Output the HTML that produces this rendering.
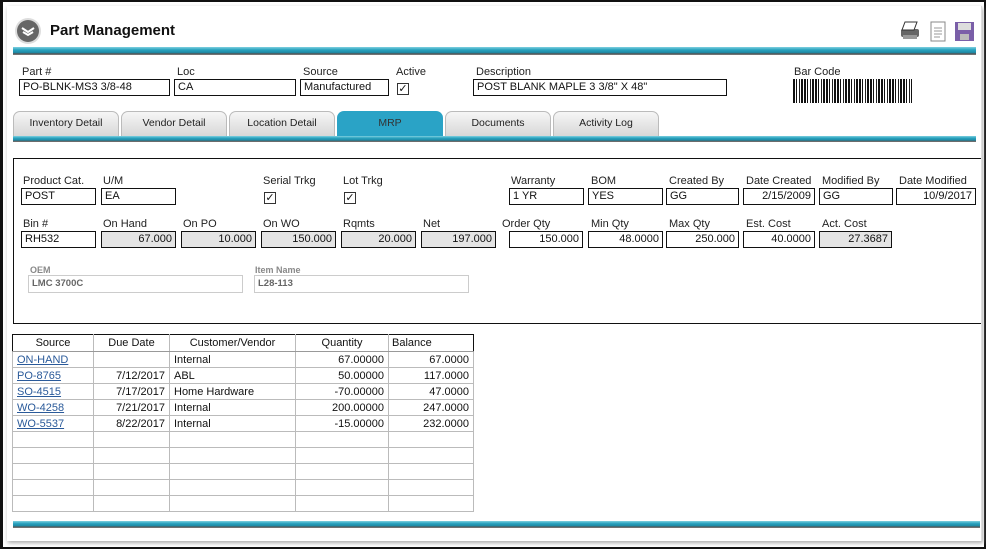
<!DOCTYPE html>
<html><head><meta charset="utf-8"><style>
*{box-sizing:border-box;margin:0;padding:0}
body{width:986px;height:549px;position:relative;background:#fff;font-family:"Liberation Sans",sans-serif;font-size:11px;color:#111;overflow:hidden}
.a{position:absolute}
.lbl{position:absolute;font-size:11px;white-space:nowrap;color:#222}
.in{position:absolute;height:17px;border:1px solid #111;background:#fff;font-size:11px;line-height:15px;padding:0 3px;white-space:nowrap;overflow:hidden}
.g{background:#e4e4e4}
.r{text-align:right}
.cb{position:absolute;width:12px;height:12px;border:1px solid #333;background:#fff;font-size:11px;line-height:10px;text-align:center}
.bar{position:absolute;left:13px;width:963px;height:8px;background:linear-gradient(#7fd0e0 0,#2aa3bf 35%,#1d8aa6 70%,#555 85%,#888 100%)}
.tab{position:absolute;top:111px;height:26px;width:106px;border:1px solid #bbb;border-bottom:none;border-radius:7px 7px 0 0;background:linear-gradient(#f6f6f6,#d6d6d6);text-align:center;line-height:22px;font-size:10.5px;color:#222}
table{border-collapse:collapse;position:absolute;left:12px;top:334px;width:462px;border:1px solid #111;font-size:11px}
td{border:1px solid #bbb;height:16px;padding:0 4px;white-space:nowrap}
th{font-weight:normal;height:17px;border-left:1px solid #bbb;border-bottom:1px solid #999}
a{color:#2a5a9a}
.oem{position:absolute;font-size:9px;font-weight:bold;color:#888}
.oin{position:absolute;height:18px;border:1px solid #ccc;font-size:9.5px;font-weight:bold;color:#666;line-height:16px;padding:0 3px}
</style></head><body>
<div class="a" style="left:0;top:0;width:986px;height:549px;border:2px solid #111;border-left-width:3px"></div>
<div class="a" style="left:7px;top:6px;width:975px;height:535px;box-shadow:1px 2px 4px #aaa;border-right:1px solid #ddd"></div>
<svg class="a" style="left:14px;top:17px" width="28" height="28"><circle cx="14" cy="14" r="13" fill="#ddd"/><circle cx="14" cy="14" r="11" fill="#666"/><path d="M8 11l6 4 6-4M9 15l5 3 5-3" stroke="#fff" stroke-width="2" fill="none"/></svg>
<div class="a" style="left:50px;top:22px;font-size:15px;font-weight:bold">Part Management</div>
<svg class="a" style="left:899px;top:21px" width="76" height="22">
<rect x="2" y="8" width="18" height="8" fill="#666" rx="2"/><polygon points="6,1 18,1 15,9 3,9" fill="#fff" stroke="#333"/><rect x="4" y="14" width="14" height="4" fill="#999"/>
<rect x="32" y="1" width="14" height="19" fill="#fff" stroke="#888"/><path d="M35 7h8M35 10h8M35 13h8M35 16h6" stroke="#999"/>
<rect x="56" y="1" width="19" height="19" fill="#7a5fa8"/><rect x="59" y="2" width="13" height="7" fill="#ddd"/><rect x="61" y="13" width="9" height="6" fill="#bbb"/>
</svg>
<div class="bar" style="top:47px"></div>
<div class="lbl" style="left:22px;top:66px">Part #</div>
<div class="in" style="left:19px;top:79px;width:151px">PO-BLNK-MS3 3/8-48</div>
<div class="lbl" style="left:177px;top:66px">Loc</div>
<div class="in" style="left:174px;top:79px;width:122px">CA</div>
<div class="lbl" style="left:303px;top:66px">Source</div>
<div class="in" style="left:300px;top:79px;width:89px">Manufactured</div>
<div class="lbl" style="left:396px;top:66px">Active</div>
<div class="cb" style="left:397px;top:83px">&#10003;</div>
<div class="lbl" style="left:476px;top:66px">Description</div>
<div class="in" style="left:473px;top:79px;width:254px">POST BLANK MAPLE 3 3/8" X 48"</div>
<div class="lbl" style="left:794px;top:66px">Bar Code</div>
<div class="a" style="left:793px;top:79px;width:119px;height:24px;background:repeating-linear-gradient(90deg,#111 0 2px,#fff 2px 3px,#111 3px 4px,#fff 4px 6px,#222 6px 7px,#fff 7px 8px,#111 8px 10px,#fff 10px 11px)"></div>
<div class="tab" style="left:13px">Inventory Detail</div>
<div class="tab" style="left:121px">Vendor Detail</div>
<div class="tab" style="left:229px">Location Detail</div>
<div class="tab" style="left:337px;background:#2aa3c6;border-color:#2aa3c6;color:#333">MRP</div>
<div class="tab" style="left:445px">Documents</div>
<div class="tab" style="left:553px">Activity Log</div>
<div class="bar" style="top:136px;height:6px"></div>
<div class="a" style="left:13px;top:158px;width:968px;height:166px;border:1px solid #111;border-right:none"></div>
<div class="lbl" style="left:23px;top:175px">Product Cat.</div><div class="in" style="left:21px;top:188px;width:75px">POST</div>
<div class="lbl" style="left:103px;top:175px">U/M</div><div class="in" style="left:101px;top:188px;width:75px">EA</div>
<div class="lbl" style="left:263px;top:175px">Serial Trkg</div><div class="cb" style="left:264px;top:192px">&#10003;</div>
<div class="lbl" style="left:343px;top:175px">Lot Trkg</div><div class="cb" style="left:344px;top:192px">&#10003;</div>
<div class="lbl" style="left:511px;top:175px">Warranty</div><div class="in" style="left:509px;top:188px;width:75px">1 YR</div>
<div class="lbl" style="left:591px;top:175px">BOM</div><div class="in" style="left:588px;top:188px;width:75px">YES</div>
<div class="lbl" style="left:669px;top:175px">Created By</div><div class="in" style="left:666px;top:188px;width:73px">GG</div>
<div class="lbl" style="left:746px;top:175px">Date Created</div><div class="in r" style="left:743px;top:188px;width:72px">2/15/2009</div>
<div class="lbl" style="left:822px;top:175px">Modified By</div><div class="in" style="left:819px;top:188px;width:74px">GG</div>
<div class="lbl" style="left:899px;top:175px">Date Modified</div><div class="in r" style="left:896px;top:188px;width:80px">10/9/2017</div>
<div class="lbl" style="left:23px;top:218px">Bin #</div><div class="in" style="left:21px;top:231px;width:75px">RH532</div>
<div class="lbl" style="left:103px;top:218px">On Hand</div><div class="in g r" style="left:101px;top:231px;width:75px">67.000</div>
<div class="lbl" style="left:183px;top:218px">On PO</div><div class="in g r" style="left:181px;top:231px;width:75px">10.000</div>
<div class="lbl" style="left:263px;top:218px">On WO</div><div class="in g r" style="left:261px;top:231px;width:75px">150.000</div>
<div class="lbl" style="left:343px;top:218px">Rqmts</div><div class="in g r" style="left:341px;top:231px;width:75px">20.000</div>
<div class="lbl" style="left:423px;top:218px">Net</div><div class="in g r" style="left:421px;top:231px;width:75px">197.000</div>
<div class="lbl" style="left:502px;top:218px">Order Qty</div><div class="in r" style="left:509px;top:231px;width:74px">150.000</div>
<div class="lbl" style="left:591px;top:218px">Min Qty</div><div class="in r" style="left:588px;top:231px;width:75px">48.0000</div>
<div class="lbl" style="left:669px;top:218px">Max Qty</div><div class="in r" style="left:666px;top:231px;width:73px">250.000</div>
<div class="lbl" style="left:746px;top:218px">Est. Cost</div><div class="in r" style="left:743px;top:231px;width:72px">40.0000</div>
<div class="lbl" style="left:822px;top:218px">Act. Cost</div><div class="in g r" style="left:819px;top:231px;width:73px">27.3687</div>
<div class="oem" style="left:30px;top:265px">OEM</div><div class="oin" style="left:28px;top:275px;width:215px">LMC 3700C</div>
<div class="oem" style="left:255px;top:265px">Item Name</div><div class="oin" style="left:254px;top:275px;width:215px">L28-113</div>
<table>
<tr><th style="width:81px;border-left:none">Source</th><th style="width:76px">Due Date</th><th style="width:126px">Customer/Vendor</th><th style="width:93px">Quantity</th><th style="text-align:left;padding-left:3px">Balance</th></tr>
<tr><td><a href="#">ON-HAND</a></td><td></td><td>Internal</td><td class="r">67.00000</td><td class="r">67.0000</td></tr>
<tr><td><a href="#">PO-8765</a></td><td class="r">7/12/2017</td><td>ABL</td><td class="r">50.00000</td><td class="r">117.0000</td></tr>
<tr><td><a href="#">SO-4515</a></td><td class="r">7/17/2017</td><td>Home Hardware</td><td class="r">-70.00000</td><td class="r">47.0000</td></tr>
<tr><td><a href="#">WO-4258</a></td><td class="r">7/21/2017</td><td>Internal</td><td class="r">200.00000</td><td class="r">247.0000</td></tr>
<tr><td><a href="#">WO-5537</a></td><td class="r">8/22/2017</td><td>Internal</td><td class="r">-15.00000</td><td class="r">232.0000</td></tr>
<tr><td></td><td></td><td></td><td></td><td></td></tr>
<tr><td></td><td></td><td></td><td></td><td></td></tr>
<tr><td></td><td></td><td></td><td></td><td></td></tr>
<tr><td></td><td></td><td></td><td></td><td></td></tr>
<tr><td></td><td></td><td></td><td></td><td></td></tr>
</table>
<div class="bar" style="top:521px;width:967px;height:7px"></div>
</body></html>
